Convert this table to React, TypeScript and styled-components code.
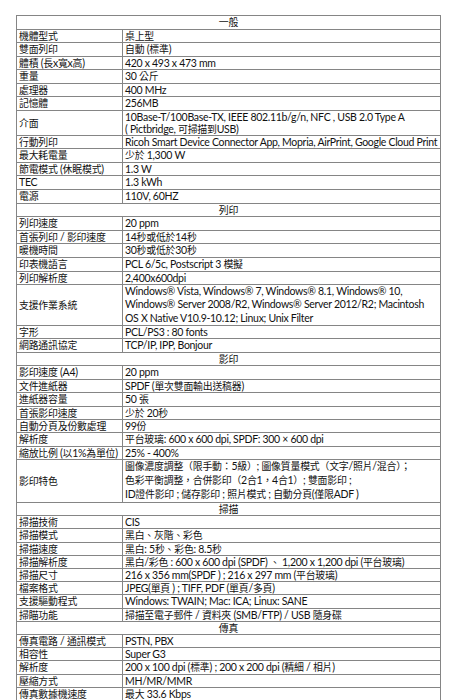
import { Fragment } from 'react'
import styled, { createGlobalStyle } from 'styled-components'

const GlobalStyle = createGlobalStyle`
    body {
        margin: 0;
        background: #fff;
        font-family: "Lato", "Noto Sans CJK TC", sans-serif;
    }
`

const Page = styled.div`
    padding: 15px 0 0 16px;
`

const Table = styled.table`
    border-collapse: collapse;
    width: 424px;
    table-layout: fixed;
    font-size: 10.5px;
    letter-spacing: -0.3px;
    color: #111;
`

const Col = styled.col<{ $w: number }>`
    width: ${p => p.$w}px;
`

const Cell = styled.td<{ $lh: number }>`
    border: 1px solid #858585;
    padding: 0 2px;
    line-height: ${p => p.$lh}px;
    white-space: nowrap;
    vertical-align: middle;
    overflow: hidden;
`

const Head = styled(Cell)`
    text-align: center;
`

// CJK glyphs sit a touch smaller than the Latin text in the spec sheet
const Han = styled.span`
    font-family: "Noto Sans CJK TC", sans-serif;
    font-size: 9.9px;
    letter-spacing: -0.2px;
`

const cjk = /([\u2e80-\u9fff\uf900-\ufaff\uff00-\uffef\u3000-\u303f]+)/

function Txt({ s }: { s: string }) {
    return (
        <>
            {s.split(cjk).map((part, i) => (i % 2 ? <Han key={i}>{part}</Han> : part))}
        </>
    )
}

type Row = { k: string; v: string[]; lh?: number }
type Section = { title: string; lh: number; rows: Row[] }

const r = (k: string, ...v: string[]): Row => ({ k, v })

const sections: Section[] = [
    {
        title: '一般',
        lh: 12.55,
        rows: [
            r('機體型式', '桌上型'),
            r('雙面列印', '自動 (標準)'),
            r('體積 (長x寬x高)', '420 x 493 x 473 mm'),
            r('重量', '30 公斤'),
            r('處理器', '400 MHz'),
            r('記憶體', '256MB'),
            { k: '介面', v: ['10Base-T/100Base-TX, IEEE 802.11b/g/n, NFC , USB 2.0 Type A', '( Pictbridge, 可掃描到USB)'], lh: 12 },
            r('行動列印', 'Ricoh Smart Device Connector App, Mopria, AirPrint, Google Cloud Print'),
            r('最大耗電量', '少於 1,300 W'),
            r('節電模式 (休眠模式)', '1.3 W'),
            r('TEC', '1.3 kWh'),
            r('電源', '110V, 60HZ'),
        ],
    },
    {
        title: '列印',
        lh: 12.6,
        rows: [
            r('列印速度', '20 ppm'),
            r('首張列印 / 影印速度', '14秒或低於14秒'),
            r('暖機時間', '30秒或低於30秒'),
            r('印表機語言', 'PCL 6/5c, Postscript 3 模擬'),
            r('列印解析度', '2,400x600dpi'),
            {
                k: '支援作業系統',
                v: [
                    'Windows® Vista, Windows® 7, Windows® 8.1, Windows® 10,',
                    'Windows® Server 2008/R2, Windows® Server 2012/R2; Macintosh',
                    'OS X Native V10.9-10.12; Linux; Unix Filter',
                ],
                lh: 13.2,
            },
            r('字形', 'PCL/PS3 : 80 fonts'),
            r('網路通訊協定', 'TCP/IP, IPP, Bonjour'),
        ],
    },
    {
        title: '影印',
        lh: 12.4,
        rows: [
            r('影印速度 (A4)', '20 ppm'),
            r('文件進紙器', 'SPDF (單次雙面輸出送稿器)'),
            r('進紙器容量', '50 張'),
            r('首張影印速度', '少於 20秒'),
            r('自動分頁及份數處理', '99份'),
            r('解析度', '平台玻璃: 600 x 600 dpi, SPDF: 300 × 600 dpi'),
            r('縮放比例 (以1%為單位)', '25% - 400%'),
            {
                k: '影印特色',
                v: [
                    '圖像濃度調整（限手動：5級）; 圖像質量模式（文字/照片/混合）；',
                    '色彩平衡調整，合併影印（2合1，4合1）; 雙面影印 ;',
                    'ID證件影印 ; 儲存影印 ; 照片模式 ; 自動分頁(僅限ADF )',
                ],
                lh: 13.9,
            },
        ],
    },
    {
        title: '掃描',
        lh: 12.2,
        rows: [
            r('掃描技術', 'CIS'),
            r('掃描模式', '黑白、灰階、彩色'),
            r('掃描速度', '黑白: 5秒、彩色: 8.5秒'),
            r('掃描解析度', '黑白/彩色 : 600 x 600 dpi (SPDF) 、 1,200 x 1,200 dpi (平台玻璃)'),
            r('掃描尺寸', '216 x 356 mm(SPDF ) ; 216 x 297 mm (平台玻璃)'),
            r('檔案格式', 'JPEG(單頁 ) ; TIFF, PDF (單頁/多頁)'),
            r('支援驅動程式', 'Windows: TWAIN; Mac: ICA; Linux: SANE'),
            r('掃瞄功能', '掃描至電子郵件 / 資料夾 (SMB/FTP) / USB 隨身碟'),
        ],
    },
    {
        title: '傳真',
        lh: 12.2,
        rows: [
            r('傳真電路 / 通訊模式', 'PSTN, PBX'),
            r('相容性', 'Super G3'),
            r('解析度', '200 x 100 dpi (標準) ; 200 x 200 dpi (精細 / 相片)'),
            r('壓縮方式', 'MH/MR/MMR'),
            r('傳真數據機速度', '最大 33.6 Kbps'),
        ],
    },
]

export default function App() {
    return (
        <>
            <GlobalStyle />
            <Page>
                <Table>
                    <colgroup>
                        <Col $w={106} />
                        <Col $w={318} />
                    </colgroup>
                    <tbody>
                        {sections.map(s => (
                            <Fragment key={s.title}>
                                <tr>
                                    <Head colSpan={2} $lh={s.lh}>
                                        <Txt s={s.title} />
                                    </Head>
                                </tr>
                                {s.rows.map((row, i) => (
                                    <tr key={i}>
                                        <Cell $lh={s.lh}>
                                            <Txt s={row.k} />
                                        </Cell>
                                        <Cell $lh={row.lh ?? s.lh}>
                                            {row.v.map((line, j) => (
                                                <div key={j}>
                                                    <Txt s={line} />
                                                </div>
                                            ))}
                                        </Cell>
                                    </tr>
                                ))}
                            </Fragment>
                        ))}
                    </tbody>
                </Table>
            </Page>
        </>
    )
}
